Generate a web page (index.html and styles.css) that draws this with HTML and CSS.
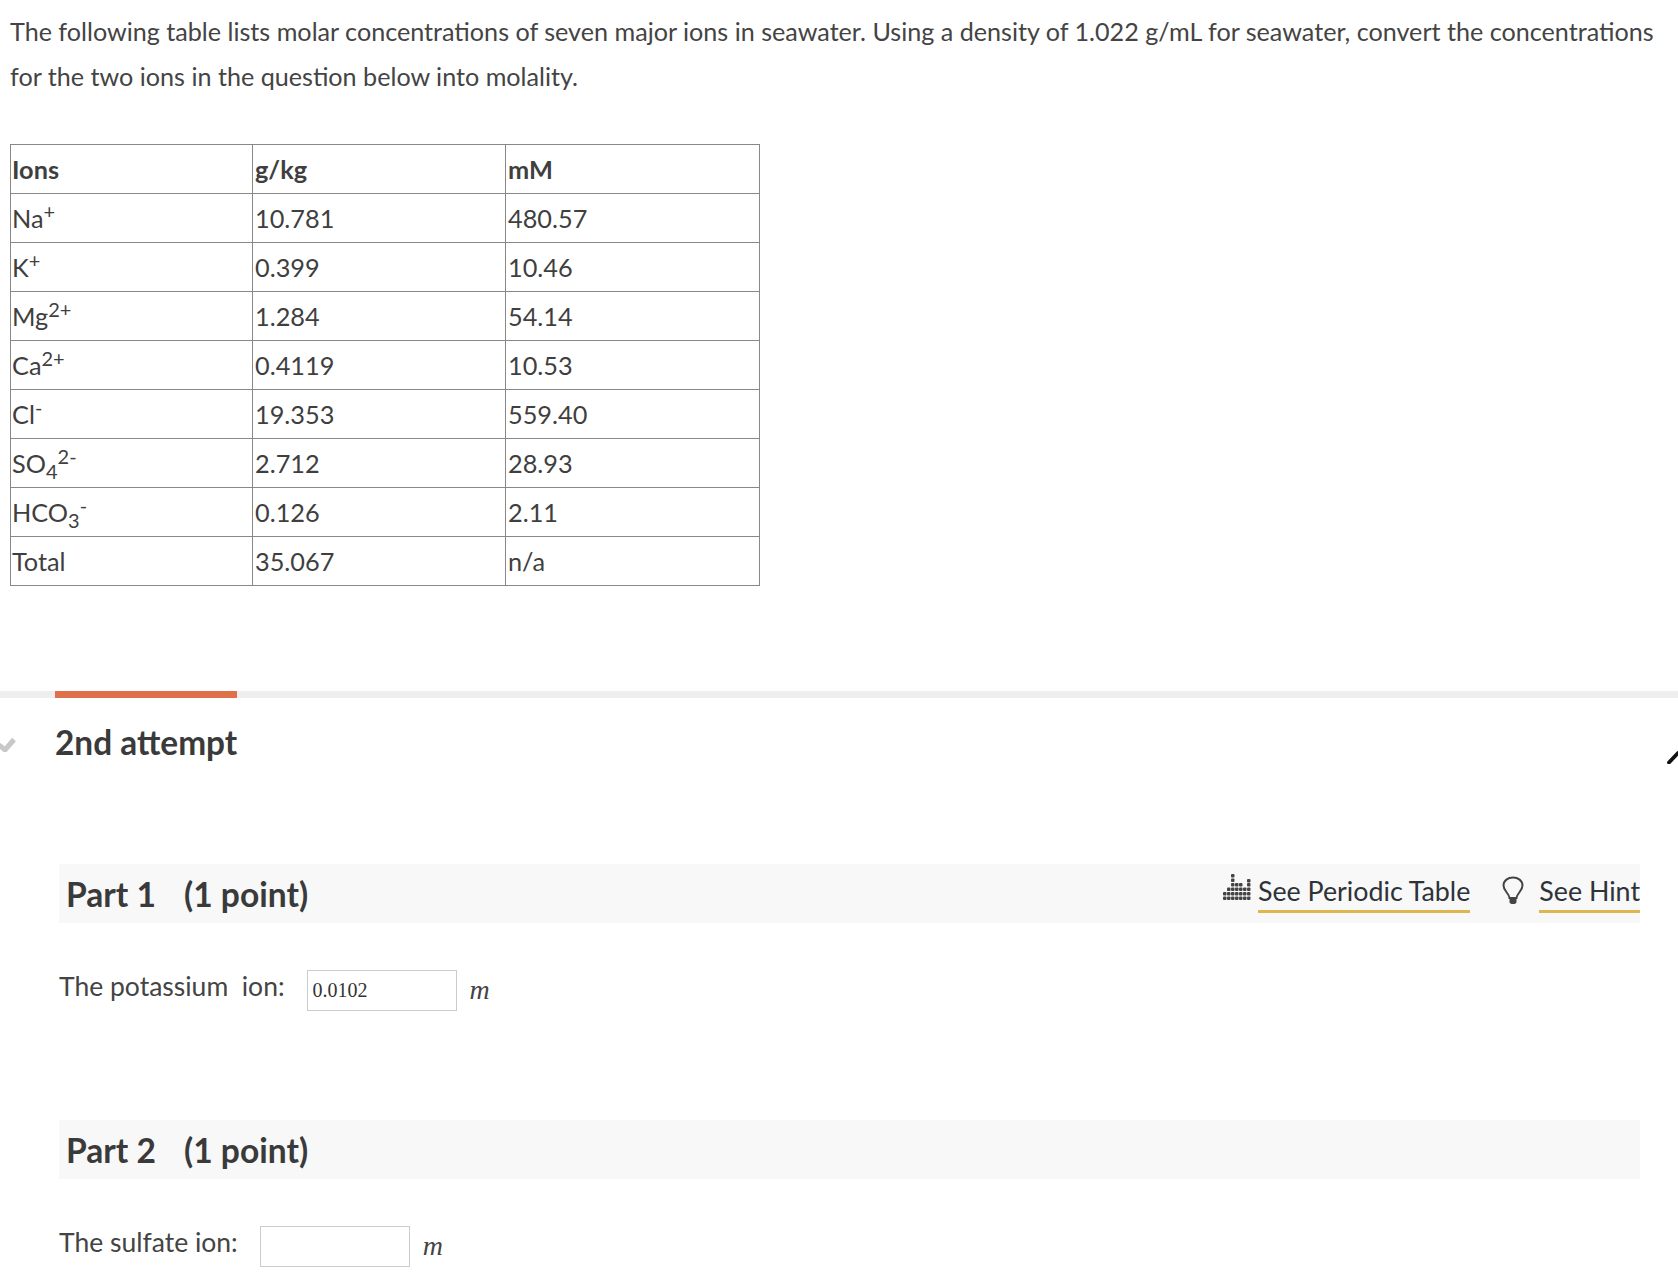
FILE: index.html
```html
<!DOCTYPE html>
<html lang="en">
<head>
<meta charset="utf-8">
<title>Seawater ions</title>
<link rel="stylesheet" href="styles.css">
</head>
<body>
<main class="page">
  <section class="intro">
    <p class="lead">The following table lists molar concentrations of seven major ions in seawater. Using a density of 1.022 g/mL for seawater, convert the concentrations for the two ions in the question below into molality.</p>
    <table class="ions">
      <tr class="head"><td class="c1">Ions</td><td class="c2">g/kg</td><td class="c3">mM</td></tr>
      <tr><td>Na<sup>+</sup></td><td>10.781</td><td>480.57</td></tr>
      <tr><td>K<sup>+</sup></td><td>0.399</td><td>10.46</td></tr>
      <tr><td>Mg<sup>2+</sup></td><td>1.284</td><td>54.14</td></tr>
      <tr><td>Ca<sup>2+</sup></td><td>0.4119</td><td>10.53</td></tr>
      <tr><td>Cl<sup>-</sup></td><td>19.353</td><td>559.40</td></tr>
      <tr><td>SO<sub>4</sub><sup>2-</sup></td><td>2.712</td><td>28.93</td></tr>
      <tr><td>HCO<sub>3</sub><sup>-</sup></td><td>0.126</td><td>2.11</td></tr>
      <tr><td>Total</td><td>35.067</td><td>n/a</td></tr>
    </table>
  </section>

  <section class="attempt">
    <div class="rule"><div class="rule-mark"></div></div>
    <svg class="check" width="16" height="15" viewBox="0 0 16 15" aria-hidden="true"><path d="M-1 8 L5 13 L14 2.5" fill="none" stroke="#c8c8c8" stroke-width="5"/></svg>
    <svg class="pencil" width="12" height="14" viewBox="0 0 12 14" aria-hidden="true"><path d="M3 12.5 L12 3" fill="none" stroke="#111" stroke-width="3.8" stroke-linecap="round"/></svg>
    <h2 class="attempt-title">2nd attempt</h2>

    <div class="part">
      <div class="band">
        <h3 class="part-title"><span>Part 1</span><span>(1 point)</span></h3>
        <div class="tools">
          <div class="tool tool-table">
            <svg class="icon-table" width="28" height="27" viewBox="0 0 28 27" fill="#444" aria-hidden="true">
              <g>
                <rect x="8" y="0" width="3.5" height="3.5" rx="1"/><rect x="8" y="4.5" width="3.5" height="3.5" rx="1"/>
                <rect x="8" y="9" width="3.5" height="3.5" rx="1"/><rect x="12" y="9" width="3.5" height="3.5" rx="1"/><rect x="16" y="9" width="3.5" height="3.5" rx="1"/><rect x="24" y="5" width="3.5" height="3.5" rx="1"/>
                <rect x="4" y="13.5" width="3.5" height="3.5" rx="1"/><rect x="8" y="13.5" width="3.5" height="3.5" rx="1"/><rect x="12" y="13.5" width="3.5" height="3.5" rx="1"/><rect x="16" y="13.5" width="3.5" height="3.5" rx="1"/><rect x="20" y="13.5" width="3.5" height="3.5" rx="1"/><rect x="24" y="9" width="3.5" height="3.5" rx="1"/><rect x="24" y="13.5" width="3.5" height="3.5" rx="1"/>
                <rect x="0" y="18" width="3.5" height="3.5" rx="1"/><rect x="4" y="18" width="3.5" height="3.5" rx="1"/><rect x="8" y="18" width="3.5" height="3.5" rx="1"/><rect x="12" y="18" width="3.5" height="3.5" rx="1"/><rect x="16" y="18" width="3.5" height="3.5" rx="1"/><rect x="20" y="18" width="3.5" height="3.5" rx="1"/><rect x="24" y="18" width="3.5" height="3.5" rx="1"/>
                <rect x="0" y="22.5" width="3.5" height="3.5" rx="1"/><rect x="4" y="22.5" width="3.5" height="3.5" rx="1"/><rect x="8" y="22.5" width="3.5" height="3.5" rx="1"/><rect x="12" y="22.5" width="3.5" height="3.5" rx="1"/><rect x="16" y="22.5" width="3.5" height="3.5" rx="1"/><rect x="20" y="22.5" width="3.5" height="3.5" rx="1"/><rect x="24" y="22.5" width="3.5" height="3.5" rx="1"/>
              </g>
            </svg>
            <span class="tool-link">See Periodic Table</span>
          </div>
          <div class="tool tool-hint">
            <svg class="icon-hint" width="22" height="30" viewBox="0 0 22 30" aria-hidden="true"><path d="M7.5 22 C7 17 1.5 15 1.5 9.5 C1.5 4.5 6 1.5 11 1.5 C16 1.5 20.5 4.5 20.5 9.5 C20.5 15 15 17 14.5 22 Z" fill="none" stroke="#444" stroke-width="2"/><path d="M7.5 22 H14.5 V26 C14.5 27.5 13 28 11 28 C9 28 7.5 27.5 7.5 26 Z" fill="#444"/></svg>
            <span class="tool-link">See Hint</span>
          </div>
        </div>
      </div>
      <div class="answer">
        <span class="answer-label">The potassium&nbsp; ion:</span>
        <input class="answer-input" type="text" value="0.0102">
        <span class="unit">m</span>
      </div>
    </div>

    <div class="part part-second">
      <div class="band">
        <h3 class="part-title"><span>Part 2</span><span>(1 point)</span></h3>
      </div>
      <div class="answer">
        <span class="answer-label">The sulfate ion:</span>
        <input class="answer-input" type="text" value="">
        <span class="unit">m</span>
      </div>
    </div>
  </section>
</main>
</body>
</html>
```
FILE: styles.css
```css
* { box-sizing: border-box; }
html, body { margin: 0; padding: 0; background: #fff; }
body { overflow: hidden; height: 1286px; font-family: Lato, "Open Sans", sans-serif; color: #3f3f3f; }
.page { width: 1678px; }
.intro { padding: 9px 0 0 10px; height: 691px; }
.lead { margin: 0; width: 1660px; font-size: 25.15px; line-height: 45px; color: #444; }
.ions { margin-top: 45px; border-collapse: collapse; table-layout: fixed; width: 749px; font-size: 25.3px; }
.ions td { height: 49px; padding: 0 2px; border: 1px solid #888; line-height: 30px; vertical-align: middle; color: #3f3f3f; }
.ions td:first-child { padding: 0 1px; }
.ions .c1 { width: 242px; }
.ions .c2 { width: 253px; }
.ions .c3 { width: 254px; }
.ions .head td { font-weight: 700; }
.ions sup, .ions sub { font-size: 20px; line-height: 0; }
.attempt { position: relative; }
.rule { height: 7px; background: #eee; }
.rule-mark { width: 182px; height: 7px; margin-left: 55px; background: #e06f4c; }
.check { position: absolute; left: 0; top: 46px; }
.pencil { position: absolute; right: 0; top: 59px; }
.attempt-title { margin: 22px 0 0 55px; font-size: 33.4px; line-height: 44px; font-weight: 700; color: #3a3a3a; }
.part { margin: 100px 38px 0 59px; }
.part-second { margin-top: 109px; }
.band { display: flex; align-items: center; justify-content: space-between; height: 59px; padding-left: 7px; background: #f8f8f8; }
.part-title { display: flex; gap: 28px; margin: 0; padding-top: 1px; font-size: 33.6px; line-height: 58px; font-weight: 700; color: #3a3a3a; }
.tools { display: flex; gap: 32px; align-self: flex-start; }
.tool { display: flex; align-items: flex-start; gap: 7px; }
.tool-hint { gap: 15px; }
.icon-table { margin-top: 10px; }
.icon-hint { margin-top: 12px; }
.tool-link { display: block; height: 44px; margin-top: 5px; font-size: 26.8px; line-height: 44px; color: #2e3338; border-bottom: 3px solid #dcb64f; }
.answer { display: flex; align-items: center; margin-top: 47px; height: 41px; }
.answer-label { font-size: 26.5px; line-height: 41px; color: #444; margin-right: 22px; position: relative; top: -4px; }
.answer-input { width: 150px; height: 41px; padding: 0 5px; border: 1px solid #ccc; background: #fff; font-family: "Liberation Serif", serif; font-size: 20px; color: #333; outline: none; }
.unit { margin-left: 13px; font-family: "Liberation Serif", serif; font-style: italic; font-size: 28px; color: #444; position: relative; top: -1px; }
```
